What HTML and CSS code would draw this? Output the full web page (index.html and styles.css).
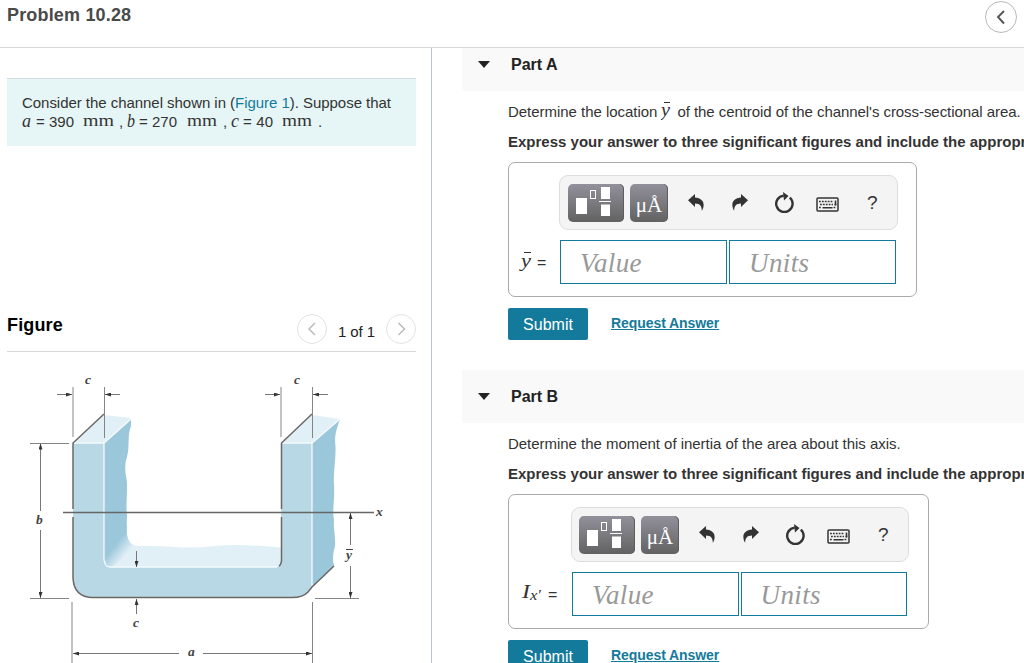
FILE: index.html
```html
<!DOCTYPE html>
<html lang="en">
<head>
<meta charset="utf-8">
<title>Problem 10.28</title>
<link rel="stylesheet" href="styles.css">
</head>
<body>
<svg class="defs" width="0" height="0">
  <defs>
    <symbol id="undo" viewBox="0 0 16 17"><path d="M0 6.3 7 0V3.6C12.5 4 16 7 15.6 11.5 15.4 14 14.8 15.5 13.8 16.8 13.9 12 12 9.5 7 9.4V13Z"/></symbol>
    <symbol id="redo" viewBox="0 0 16 17"><path d="M16 6.3 9 0V3.6C3.5 4 0 7 .4 11.5 .6 14 1.2 15.5 2.2 16.8 2.1 12 4 9.5 9 9.4V13Z"/></symbol>
    <symbol id="reset" viewBox="0 0 20 21"><path d="M15.8 5.6A8.200 8.200 0 1 1 9.8 3.6" fill="none" stroke="#333" stroke-width="2.400"/><path d="M9 0 14.500 4 10 8.500Z"/></symbol>
    <symbol id="keyboard" viewBox="0 0 23 15"><rect x="1" y="1" width="21" height="13" rx="1" fill="none" stroke="#333" stroke-width="1.500"/><path d="M3 4.500h14M4 7.500h13M3 10.500h2M17.500 10.500h3M18.500 7.500h2" fill="none" stroke="#333" stroke-width="1.700" stroke-dasharray="1.800 1.100"/><path d="M19.500 3.500v5M6.500 10.700h10" fill="none" stroke="#333" stroke-width="1.600"/></symbol>
    <symbol id="templates" viewBox="0 0 56 38"><g fill="#fff"><rect x="8" y="14" width="11" height="16"/><rect x="33" y="3" width="9" height="12"/><rect x="31" y="17" width="12" height="1"/><rect x="33" y="20.500" width="9" height="11.500"/></g><rect x="22.500" y="6.500" width="5" height="8" fill="none" stroke="#fff"/></symbol>
  </defs>
</svg>
<header class="top">
  <h1>Problem 10.28</h1>
  <button class="round big"><svg width="30" height="30"><path d="M18 9 12 15 18 21.500" fill="none" stroke="#555" stroke-width="1.900"/></svg></button>
</header>
<main>
  <section class="left">
    <div class="intro">
      <p class="l1">Consider the channel shown in (<a>Figure 1</a>). Suppose that</p>
      <svg class="givens" width="330" height="20">
        <g class="math"><text x="0" y="15" textLength="9" lengthAdjust="spacingAndGlyphs">a</text><text x="105" y="15" textLength="8" lengthAdjust="spacingAndGlyphs">b</text><text x="209" y="15" textLength="8" lengthAdjust="spacingAndGlyphs">c</text></g>
        <text x="14" y="15" textLength="38">= 390</text><text x="97" y="15">,</text>
        <text x="117" y="15" textLength="38">= 270</text><text x="201" y="15">,</text>
        <text x="221" y="15" textLength="30">= 40</text><text x="296" y="15">.</text>
        <g class="unit"><text x="61" y="14" textLength="31" lengthAdjust="spacingAndGlyphs">mm</text><text x="165" y="14" textLength="30" lengthAdjust="spacingAndGlyphs">mm</text><text x="260" y="14" textLength="30" lengthAdjust="spacingAndGlyphs">mm</text></g>
      </svg>
    </div>
    <div class="fighead">
      <h2>Figure</h2>
      <div class="pager">
        <button class="round"><svg width="28" height="28"><path d="M17 8 11 14 17 20" fill="none" stroke="#bbb" stroke-width="1.500"/></svg></button>
        <span>1 of 1</span>
        <button class="round"><svg width="28" height="28"><path d="M11.500 8 17.500 14 11.500 20" fill="none" stroke="#bbb" stroke-width="1.500"/></svg></button>
      </div>
    </div>
    <svg class="figure" width="431" height="311" viewBox="0 352 431 311">
      <defs>
        <marker id="ar" viewBox="0 0 6 4" refX="6" refY="2" markerWidth="6" markerHeight="4" markerUnits="userSpaceOnUse" orient="auto-start-reverse"><path d="M0 0 6 2 0 4Z" fill="#333"/></marker>
        <linearGradient id="fl" x1="0" y1="0" x2="1" y2="1"><stop offset=".4" stop-color="#9bc7db"/><stop offset=".68" stop-color="#e1eff7"/></linearGradient>
      </defs>
      <path d="M104 562 127 541Q128 546 138 546 Q158 545.500 175 547 T215 546 T281 547.500V567H110Z" fill="#e1eff7"/>
      <path d="M104 443 131 419 131 426C127 436 130 446 127 457 C123 470 127 476 127 485 C127 500 126 507 127 516 C127 525 125 535 128 541L104 562Z" fill="#9bc7db"/>
      <path d="M104 540 127 525Q125 545 138 546L112 567H106Z" fill="url(#fl)"/>
      <path d="M312 443 340 419C337 428 334 435 335.500 447 C336 460 333 472 334 485 C335 500 332 509 334 520 C333 530 337 542 334 550 Q332 558 334 566L312 587Z" fill="#9bc7db"/>
      <path d="M73 443 104 415 131 418 104 443ZM281 443 312 415 340 419 312 443Z" fill="#e1eff7"/>
      <path d="M73 443H104V560Q105 567 110 567H277Q281 566 281 560V443H312V587L308 592Q303 597.500 292 597.500H93Q73 598 73 578Z" fill="#b9d8e6"/>
      <g fill="none" stroke="#f4fafd" stroke-width="1.300"><path d="M74 443H104L131 419M104 443V560Q105 567 110 567H277M282 443H312L340 419M312 443V586"/></g>
      <g fill="none" stroke="#6b6767" stroke-width="1.500"><path d="M104 414 73 443V509M73 517V578Q74 597.500 93 597.500H292Q303 597.500 308 592L312 587 334 566M312 414 281.500 443V509M281.500 517V561Q281 565 279 566"/></g>
      <g fill="none" stroke="#858585" stroke-width="1"><path d="M73 387V437M104.500 387V438M281 387V437M312.500 387V438M30 443.500H69M30 598.500H69M315 598.500H359M72 602V663M312.500 602V663"/><path d="M63 512.500H374" stroke="#666" stroke-width="1.300"/></g>
      <g stroke="#777" fill="none" stroke-width="1" marker-end="url(#ar)"><path d="M57 394.500H72"/><path d="M120 394.500H105"/><path d="M265 394.500H280"/><path d="M328 394.500H313"/><path d="M40.500 511V443.500"/><path d="M40.500 530V598"/><path d="M350.500 545V513"/><path d="M350.500 566V598"/><path d="M136.500 551V567"/><path d="M136.500 614V599"/><path d="M179 653.500H73"/><path d="M203 653.500H312"/></g>
      <g class="labels"><text x="85" y="384">c</text><text x="294" y="384">c</text><text x="36" y="524">b</text><text x="133" y="627">c</text><text x="188" y="656">a</text><text x="376" y="516">x</text><text x="346" y="559">y</text></g>
      <path d="M346 549.500H353" stroke="#444"/>
    </svg>
  </section>
  <section class="right">
    <div class="part">
      <div class="parthead"><i class="tri"></i><h3>Part A</h3></div>
      <p class="q"><span class="q1">Determine the location</span><svg class="ybar" width="12" height="22"><text x="0" y="15" textLength="9" lengthAdjust="spacingAndGlyphs">y</text><path d="M3 1.500H9" stroke="#333"/></svg><span class="q2">of the centroid of the channel's cross-sectional area.</span></p>
      <p class="ex">Express your answer to three significant figures and include the appropriate units.</p>
      <div class="answer">
        <div class="bar">
          <button class="tool t1"><svg width="56" height="38"><use href="#templates"/></svg></button>
          <button class="tool t2">μÅ</button>
          <svg class="undo" width="16" height="17"><use href="#undo"/></svg>
          <svg class="redo" width="16" height="17"><use href="#redo"/></svg>
          <svg class="reset" width="20" height="21"><use href="#reset"/></svg>
          <svg class="keyb" width="23" height="15"><use href="#keyboard"/></svg>
          <span class="help">?</span>
        </div>
        <div class="row">
          <svg class="label" width="51" height="44"><text class="m" x="12" y="27" font-size="19" textLength="10" lengthAdjust="spacingAndGlyphs">y</text><path d="M15 12.500H22" stroke="#333"/><text x="28" y="28" font-size="16">=</text></svg>
          <div class="field">Value</div><div class="field">Units</div>
        </div>
      </div>
      <div class="actions"><button class="submit">Submit</button><a class="req">Request Answer</a></div>
    </div>
    <div class="part partb">
      <div class="parthead"><i class="tri"></i><h3>Part B</h3></div>
      <p class="q"><span class="q3">Determine the moment of inertia of the area about this axis.</span></p>
      <p class="ex">Express your answer to three significant figures and include the appropriate units.</p>
      <div class="answer">
        <div class="bar">
          <button class="tool t1"><svg width="56" height="38"><use href="#templates"/></svg></button>
          <button class="tool t2">μÅ</button>
          <svg class="undo" width="16" height="17"><use href="#undo"/></svg>
          <svg class="redo" width="16" height="17"><use href="#redo"/></svg>
          <svg class="reset" width="20" height="21"><use href="#reset"/></svg>
          <svg class="keyb" width="23" height="15"><use href="#keyboard"/></svg>
          <span class="help">?</span>
        </div>
        <div class="row">
          <svg class="label" width="63" height="44"><text class="m" x="13" y="26" font-size="18" textLength="8" lengthAdjust="spacingAndGlyphs">I</text><text class="m" x="21" y="28" font-size="14" textLength="11" lengthAdjust="spacingAndGlyphs">x′</text><text x="39" y="28" font-size="16">=</text></svg>
          <div class="field">Value</div><div class="field">Units</div>
        </div>
      </div>
      <div class="actions"><button class="submit">Submit</button><a class="req">Request Answer</a></div>
    </div>
  </section>
</main>
</body>
</html>
```
FILE: styles.css
```css
* { box-sizing: border-box; }
html, body { height: 663px; overflow: hidden; }
body { margin: 0; background: #fff; color: #333; font: 15px "Liberation Sans", Arial, sans-serif; }
h1, h2, h3, p { margin: 0; white-space: nowrap; }
button { padding: 0; border: 0; font-family: inherit; }
svg { display: block; flex: none; }
.defs { position: absolute; }
.top { height: 48px; border-bottom: 1px solid #d8d8d8; display: flex; justify-content: space-between; padding: 1px 7px 0 7px; }
h1 { font-size: 18px; line-height: 28px; color: #4a4a4a; letter-spacing: .17px; }
.round { width: 30px; height: 30px; border: 1px solid #e2e2e2; border-radius: 50%; background: #fff; }
.round.big { width: 32px; height: 32px; border-color: #b9b9b9; }
main { display: flex; height: 615px; }
.left { width: 432px; flex: none; border-right: 1px solid #b9c5d3; padding-top: 30px; }
.intro { margin-left: 7px; width: 409px; height: 68px; border-top: 1px solid #d3dcdc; background: #e6f6f6; padding: 15px 15px 0; }
.intro a { color: #147a9c; }
.l1 { line-height: 18px; height: 18px; letter-spacing: -.04px; }
.givens { font-size: 15px; fill: #333; overflow: visible; }
.math { font: italic 18px "Liberation Serif", serif; }
.unit { font: 17px "Liberation Serif", serif; }
.fighead { margin: 164px 0 0 7px; width: 409px; height: 42px; border-bottom: 1px solid #d8d8d8; display: flex; justify-content: space-between; }
h2 { font-size: 18px; line-height: 30px; color: #000; letter-spacing: .15px; }
.pager { display: flex; gap: 11px; padding-top: 4px; }
.pager span { line-height: 35px; color: #222; font-size: 15px; letter-spacing: -.1px; }
.labels { font: italic bold 13.5px "Liberation Serif", serif; fill: #444; }
.right { flex: 1; min-width: 0; margin-left: 30px; overflow: hidden; }
.part { height: 322px; }
.parthead { height: 43px; background: #f9f9f9; display: flex; padding-left: 16px; }
.tri { width: 0; height: 0; border: 6px solid transparent; border-top: 7px solid #222; border-bottom: 0; margin-top: 13px; }
h3 { font-size: 16px; line-height: 34px; margin-left: 21px; color: #222; }
.partb .parthead { height: 53px; padding-top: 10px; }
.q { display: flex; margin-left: 46px; height: 42px; line-height: 42px; letter-spacing: -.03px; }
.ybar { margin: 13px 4px 0 4px; font: italic 18px "Liberation Serif", serif; fill: #333; }
.q2 { letter-spacing: -.06px; }
.ybar { margin-top: 10px; }
.ex { margin-left: 46px; font-weight: bold; line-height: 18px; height: 18px; }
.answer { margin: 11px 0 0 46px; width: 409px; height: 135px; border: 1px solid #aaa; border-radius: 7px; padding-top: 12px; }
.bar { margin-left: 50px; width: 339px; height: 55px; border: 1px solid #ddd; border-radius: 9px; background: #f4f4f4; display: flex; align-items: flex-start; padding: 8px; }
.tool { height: 38px; border-radius: 5px; background: linear-gradient(#92919b, #626262); box-shadow: inset -1px 0 #5d5d5d; }
.t1 { width: 56px; }
.t2 { width: 38px; margin-left: 6px; color: #fff; font: 21px/42px "Liberation Serif", serif; }
.bar svg { fill: #333; }
.undo { margin: 10px 0 0 20px; }
.redo { margin: 10px 0 0 28px; }
.reset { margin: 8px 0 0 26px; }
.keyb { margin: 13px 0 0 22px; }
.help { margin: 6px 0 0 28px; font-size: 19px; line-height: 25px; }
.row { display: flex; margin-top: 10px; }
.row .label { fill: #333; }
.m { font-family: "Liberation Serif", serif; font-style: italic; }
.field { width: 167px; height: 44px; border: 1px solid #147a9c; margin-right: 2px; padding-left: 19px; font: italic 27px/44px "Liberation Serif", serif; letter-spacing: .4px; color: #999; }
.partb .answer { width: 420.500px; }
.partb .bar { margin-left: 62px; width: 338px; padding-left: 7px; }
.partb .field { width: 166.500px; }
.actions { display: flex; margin: 11px 0 0 46px; }
.submit { width: 80px; height: 32px; border-radius: 2px; background: #147a9c; color: #fff; font-size: 16px; line-height: 33px; }
.req { margin: 7px 0 0 23px; height: 17px; line-height: 17px; color: #147a9c; font-weight: bold; font-size: 14px; letter-spacing: -.07px; text-decoration: underline; text-underline-offset: 1px; }
```
